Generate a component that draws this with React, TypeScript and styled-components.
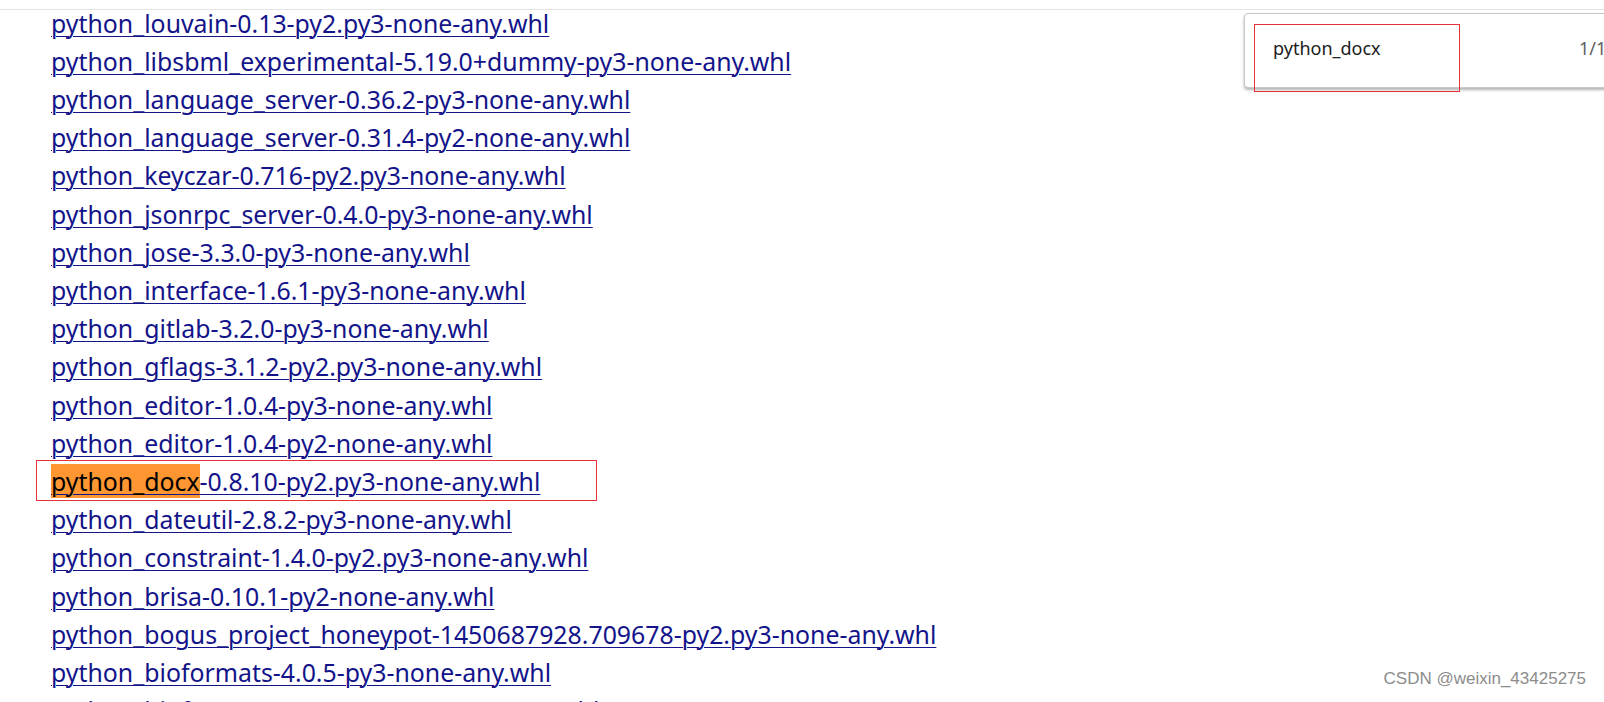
import React from "react";
import styled, { createGlobalStyle } from "styled-components";

const Global = createGlobalStyle`
  html, body { margin: 0; padding: 0; background: #fff; }
  body { width: 1604px; height: 702px; overflow: hidden; }
`;

const Page = styled.div`
  position: relative;
  width: 1604px;
  height: 702px;
  overflow: hidden;
  background: #fff;
`;

const TopEdge = styled.div`
  position: absolute;
  left: 0;
  right: 0;
  top: 9px;
  height: 1px;
  background: #e4e4e4;
`;

const List = styled.div`
  display: flex;
  flex-direction: column;
  padding: 3.5px 0 0 51px;
  font-family: "Noto Sans", "Open Sans", sans-serif;
  font-size: 24.85px;
  line-height: 38.2px;
`;

const Row = styled.div`
  position: relative;
  white-space: nowrap;
`;

const Link = styled.a`
  color: #13148a;
  text-decoration: underline;
  text-underline-offset: 3px;
  text-decoration-thickness: 1px;
`;

const Hit = styled.span`
  background: #ff9632;
  color: #000;
`;

const Mark = styled.div<{ $w: number; $h: number; $l: number; $t: number }>`
  position: absolute;
  left: ${(p) => p.$l}px;
  top: ${(p) => p.$t}px;
  width: ${(p) => p.$w}px;
  height: ${(p) => p.$h}px;
  border: 1px solid #e8323a;
  box-sizing: border-box;
  pointer-events: none;
`;

const FindBar = styled.div`
  position: absolute;
  left: 1244px;
  top: 13px;
  width: 400px;
  height: 75px;
  box-sizing: border-box;
  background: #fff;
  border: 1px solid #c9c9c9;
  border-radius: 4px;
  box-shadow: 0 2px 3px rgba(0, 0, 0, 0.3);
  display: flex;
  align-items: center;
  padding: 0 0 6px 28px;
  font-family: "Noto Sans", "Open Sans", sans-serif;
  font-size: 18px;
`;

const Query = styled.span`
  color: #202020;
  flex: 1;
`;

const Count = styled.span`
  color: #5f5f5f;
  width: 64px;
`;

const Watermark = styled.div`
  position: absolute;
  right: 18px;
  top: 669px;
  font-family: "Liberation Sans", Arial, sans-serif;
  font-size: 17px;
  color: #8c8c8c;
  text-shadow: 0 0 1px #fff;
`;

const files = [
  "python_louvain-0.13-py2.py3-none-any.whl",
  "python_libsbml_experimental-5.19.0+dummy-py3-none-any.whl",
  "python_language_server-0.36.2-py3-none-any.whl",
  "python_language_server-0.31.4-py2-none-any.whl",
  "python_keyczar-0.716-py2.py3-none-any.whl",
  "python_jsonrpc_server-0.4.0-py3-none-any.whl",
  "python_jose-3.3.0-py3-none-any.whl",
  "python_interface-1.6.1-py3-none-any.whl",
  "python_gitlab-3.2.0-py3-none-any.whl",
  "python_gflags-3.1.2-py2.py3-none-any.whl",
  "python_editor-1.0.4-py3-none-any.whl",
  "python_editor-1.0.4-py2-none-any.whl",
  "python_docx-0.8.10-py2.py3-none-any.whl",
  "python_dateutil-2.8.2-py3-none-any.whl",
  "python_constraint-1.4.0-py2.py3-none-any.whl",
  "python_brisa-0.10.1-py2-none-any.whl",
  "python_bogus_project_honeypot-1450687928.709678-py2.py3-none-any.whl",
  "python_bioformats-4.0.5-py3-none-any.whl",
  "python_bioformats-1.5.0-py2.py3-none-any.whl",
];

export default function App() {
  const q = "python_docx";
  return (
    <Page>
      <Global />
      <List>
        {files.map((f) => {
          const hit = f.startsWith(q + "-");
          return (
            <Row key={f}>
              <Link href="#">
                {hit ? (
                  <>
                    <Hit>{q}</Hit>
                    {f.slice(q.length)}
                  </>
                ) : (
                  f
                )}
              </Link>
              {hit && <Mark $l={-15} $t={-2} $w={561} $h={41} />}
            </Row>
          );
        })}
      </List>
      <TopEdge />
      <FindBar>
        <Query>{q}</Query>
        <Count>1/1</Count>
        <Mark $l={9} $t={10} $w={206} $h={68} />
      </FindBar>
      <Watermark>CSDN @weixin_43425275</Watermark>
    </Page>
  );
}
